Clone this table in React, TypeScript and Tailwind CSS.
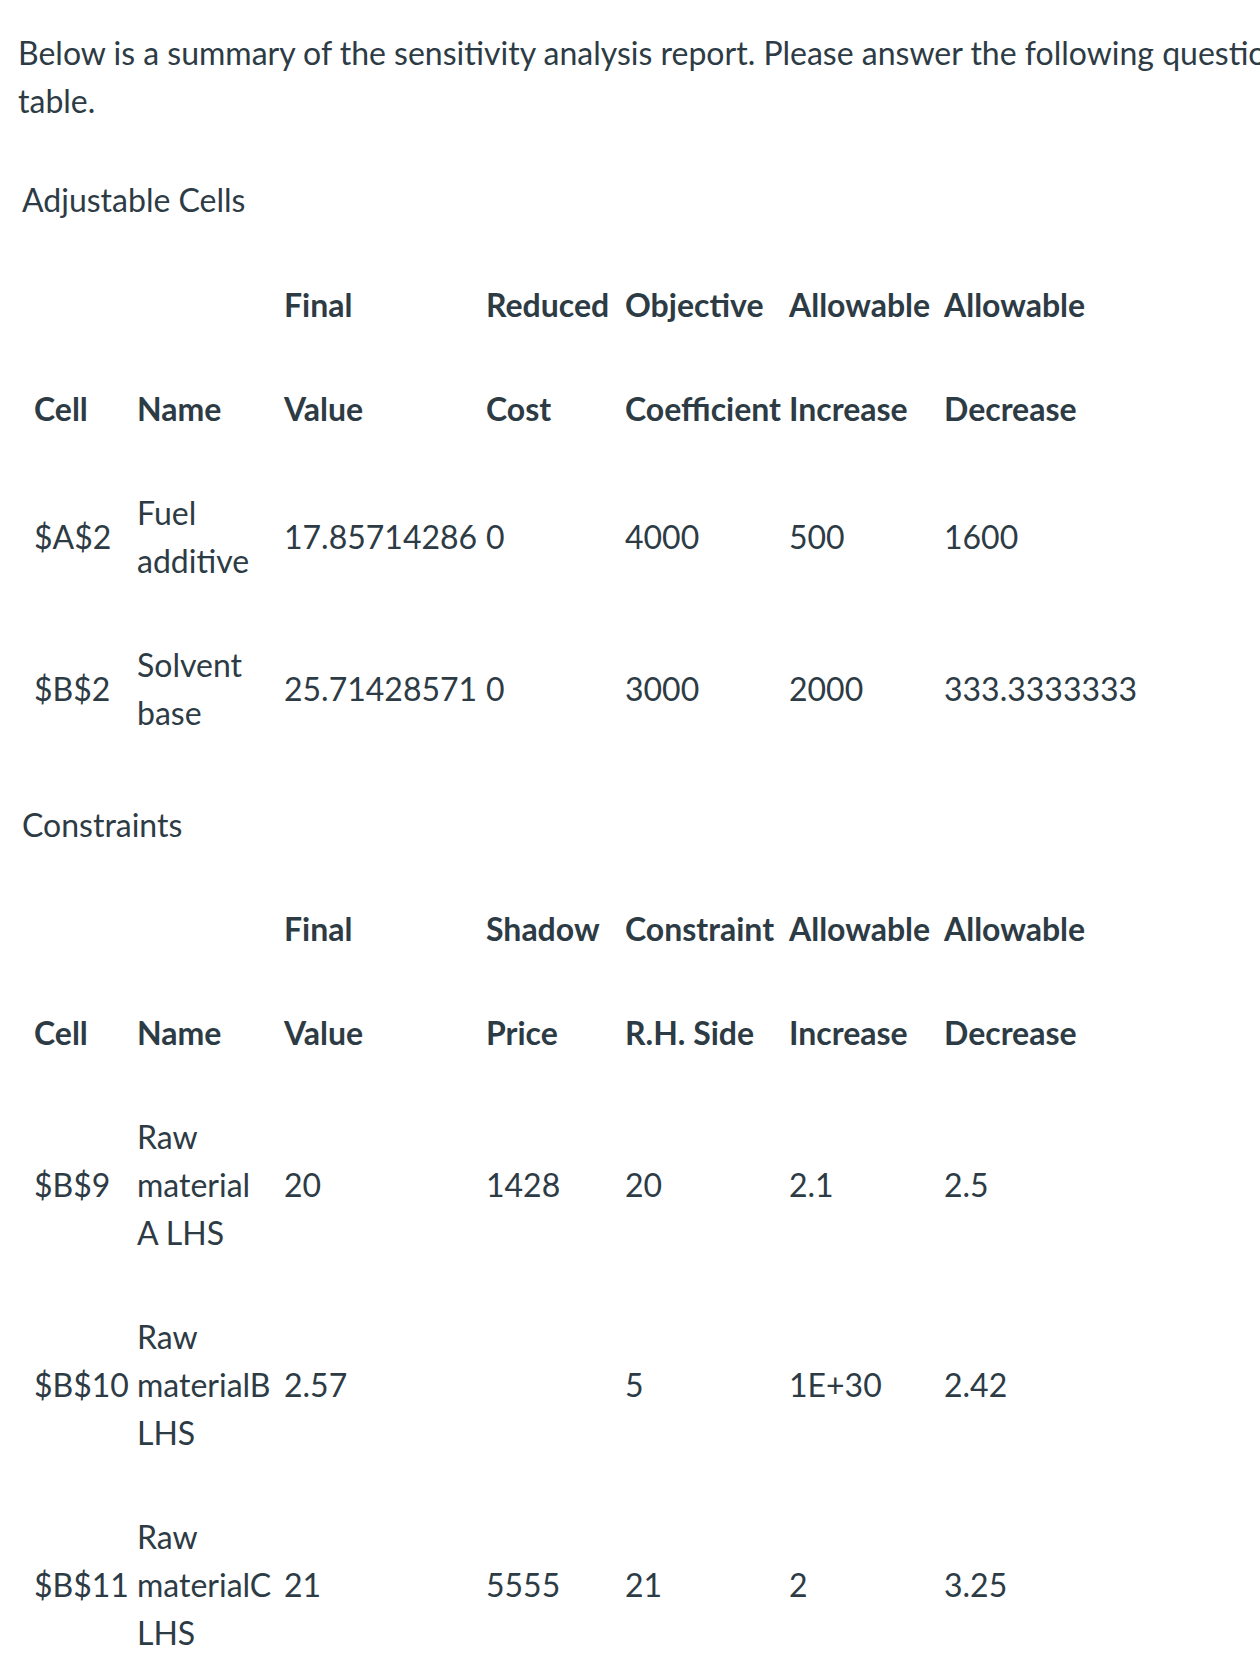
import React from "react";

type Row = string[][];

const adjHead1 = ["", "", "Final", "Reduced", "Objective", "Allowable", "Allowable"];
const adjHead2 = ["Cell", "Name", "Value", "Cost", "Coefficient", "Increase", "Decrease"];
const adjRows: Row[] = [
  [["$A$2"], ["Fuel", "additive"], ["17.85714286"], ["0"], ["4000"], ["500"], ["1600"]],
  [["$B$2"], ["Solvent", "base"], ["25.71428571"], ["0"], ["3000"], ["2000"], ["333.3333333"]],
];

const conHead1 = ["", "", "Final", "Shadow", "Constraint", "Allowable", "Allowable"];
const conHead2 = ["Cell", "Name", "Value", "Price", "R.H. Side", "Increase", "Decrease"];
const conRows: Row[] = [
  [["$B$9"], ["Raw", "material", "A LHS"], ["20"], ["1428"], ["20"], ["2.1"], ["2.5"]],
  [["$B$10"], ["Raw", "materialB", "LHS"], ["2.57"], [""], ["5"], ["1E+30"], ["2.42"]],
  [["$B$11"], ["Raw", "materialC", "LHS"], ["21"], ["5555"], ["21"], ["2"], ["3.25"]],
];

function Table({ h1, h2, rows }: { h1: string[]; h2: string[]; rows: Row[] }) {
  return (
    <div className="grid grid-cols-[103px_147px_202px_139px_164px_155px_auto] items-center pl-[34px]">
      {h1.map((t, i) => (
        <div key={"a" + i} className="py-[28px] font-bold whitespace-nowrap">
          {t || "\u00a0"}
        </div>
      ))}
      {h2.map((t, i) => (
        <div key={"b" + i} className="py-[28px] font-bold whitespace-nowrap">
          {t}
        </div>
      ))}
      {rows.map((r, ri) =>
        r.map((lines, ci) => (
          <div key={ri + "-" + ci} className="py-[28px] whitespace-nowrap">
            {lines.map((l, li) => (
              <div key={li}>{l || "\u00a0"}</div>
            ))}
          </div>
        ))
      )}
    </div>
  );
}

export default function App() {
  return (
    <div className="w-full min-h-[1676px] overflow-hidden bg-white text-[#2d3b45] font-['Lato',sans-serif] text-[32px] leading-[48px]">
      <p className="pt-[29px] pl-[18px] whitespace-nowrap">
        Below is a summary of the sensitivity analysis report. Please answer the following questions based on the
        <br />
        table.
      </p>
      <div className="mt-[51px] pl-[22px]">Adjustable Cells</div>
      <div className="mt-[29px]">
        <Table h1={adjHead1} h2={adjHead2} rows={adjRows} />
      </div>
      <div className="mt-[36px] pl-[22px]">Constraints</div>
      <div className="mt-[28px]">
        <Table h1={conHead1} h2={conHead2} rows={conRows} />
      </div>
    </div>
  );
}
